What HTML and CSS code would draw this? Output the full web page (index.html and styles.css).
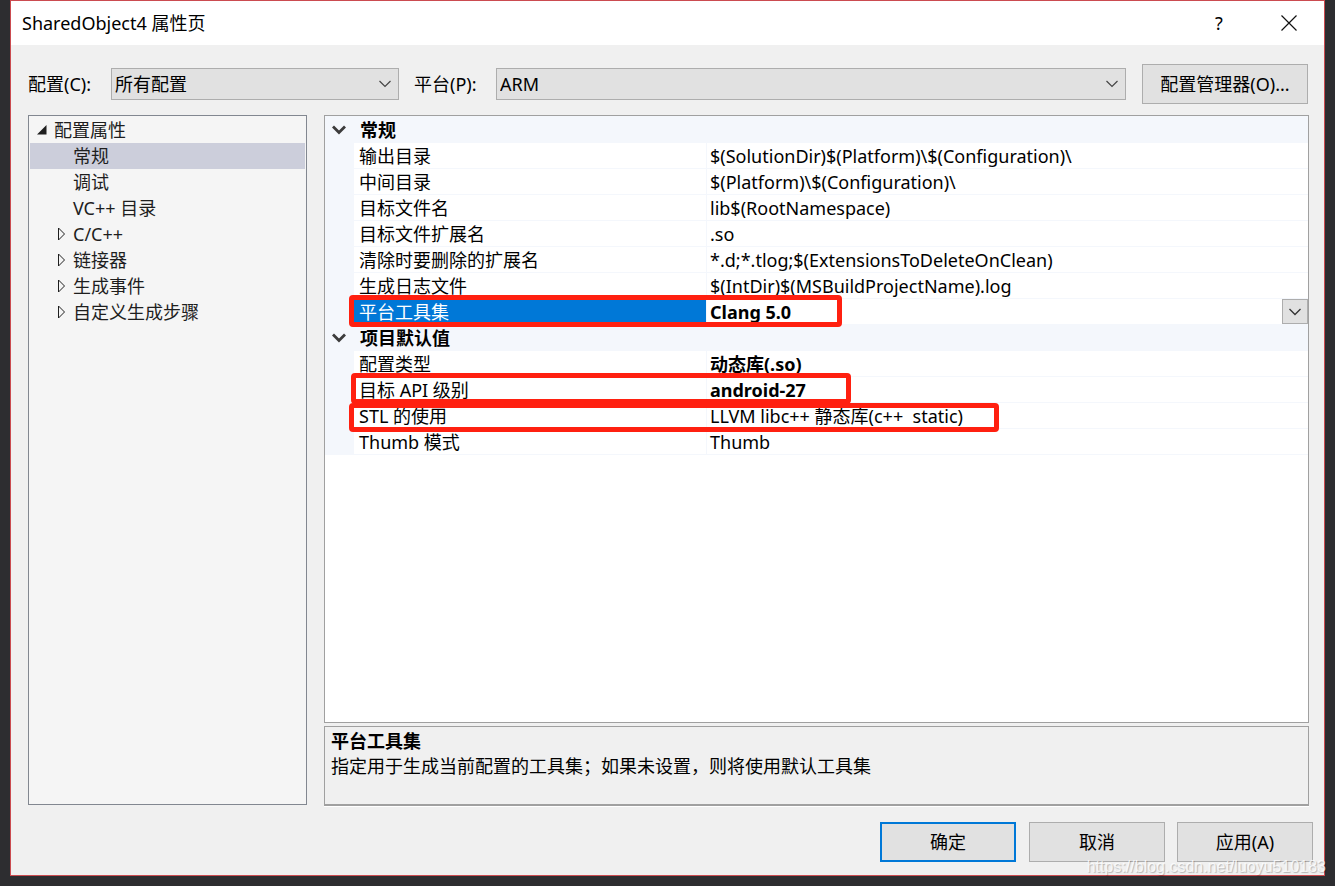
FILE: index.html
```
<!DOCTYPE html>
<html lang="zh-CN">
<head>
    <meta charset="UTF-8">
    <meta name="viewport" content="width=device-width, initial-scale=1.0">
    <title>SharedObject4 属性页</title>
    <link rel="stylesheet" href="styles.css">
</head>
<body>

    <div class="dialog">
        <header class="titlebar">
            <h1>SharedObject4 属性页</h1>
            <button class="title-button" aria-label="帮助">?</button>
            <button class="title-button" aria-label="关闭">
                <svg width="16" height="16" viewBox="0 0 16 16"><path d="M0.5 0.5L15.5 15.5M15.5 0.5L0.5 15.5" fill="none" stroke="#111" stroke-width="1.2"/></svg>
            </button>
        </header>

        <div class="toolbar">
            <label class="config-label" for="config">配置(C):</label>
            <div class="dropdown config">
                <select id="config"><option>所有配置</option></select>
                <svg width="12" height="8" viewBox="0 0 12 8"><path d="M0.5 1L6 6.5L11.5 1" fill="none" stroke="#444" stroke-width="1.2"/></svg>
            </div>
            <label class="platform-label" for="platform">平台(P):</label>
            <div class="dropdown platform">
                <select id="platform"><option>ARM</option></select>
                <svg width="12" height="8" viewBox="0 0 12 8"><path d="M0.5 1L6 6.5L11.5 1" fill="none" stroke="#444" stroke-width="1.2"/></svg>
            </div>
            <button class="button manager">配置管理器(O)...</button>
        </div>

        <main>
            <nav class="tree">
                <ul>
                    <li class="root"><svg width="10" height="10" viewBox="0 0 10 10"><path d="M9.5 0V9.5H0Z" fill="#1e1e1e"/></svg>配置属性</li>
                    <li class="selected">常规</li>
                    <li>调试</li>
                    <li>VC++ 目录</li>
                    <li><svg width="8" height="14" viewBox="0 0 8 14"><path d="M0.5 1L6.5 7L0.5 13Z" fill="none" stroke="#1e1e1e"/></svg>C/C++</li>
                    <li><svg width="8" height="14" viewBox="0 0 8 14"><path d="M0.5 1L6.5 7L0.5 13Z" fill="none" stroke="#1e1e1e"/></svg>链接器</li>
                    <li><svg width="8" height="14" viewBox="0 0 8 14"><path d="M0.5 1L6.5 7L0.5 13Z" fill="none" stroke="#1e1e1e"/></svg>生成事件</li>
                    <li><svg width="8" height="14" viewBox="0 0 8 14"><path d="M0.5 1L6.5 7L0.5 13Z" fill="none" stroke="#1e1e1e"/></svg>自定义生成步骤</li>
                </ul>
            </nav>

            <div class="properties">
                <div class="grid">
                    <table>
                        <colgroup>
                            <col class="col-gutter">
                            <col class="col-name">
                            <col>
                        </colgroup>
                        <tbody>
                            <tr class="category">
                                <td class="gutter"><svg width="14" height="10" viewBox="0 0 14 10"><path d="M1 1.5L7 7.5L13 1.5" fill="none" stroke="#3c3c3c" stroke-width="2.8"/></svg></td>
                                <th colspan="2">常规</th>
                            </tr>
                            <tr><td class="gutter"></td><td class="name">输出目录</td><td>$(SolutionDir)$(Platform)\$(Configuration)\</td></tr>
                            <tr><td class="gutter"></td><td class="name">中间目录</td><td>$(Platform)\$(Configuration)\</td></tr>
                            <tr><td class="gutter"></td><td class="name">目标文件名</td><td>lib$(RootNamespace)</td></tr>
                            <tr><td class="gutter"></td><td class="name">目标文件扩展名</td><td>.so</td></tr>
                            <tr><td class="gutter"></td><td class="name">清除时要删除的扩展名</td><td>*.d;*.tlog;$(ExtensionsToDeleteOnClean)</td></tr>
                            <tr><td class="gutter"></td><td class="name">生成日志文件</td><td>$(IntDir)$(MSBuildProjectName).log</td></tr>
                            <tr class="current">
                                <td class="gutter"></td>
                                <td class="name">平台工具集</td>
                                <td class="changed">
                                    <div class="editor">
                                        <span>Clang 5.0</span>
                                        <button class="open-list" aria-label="打开列表"><svg width="12" height="8" viewBox="0 0 12 8"><path d="M0.5 1L6 6.5L11.5 1" fill="none" stroke="#333" stroke-width="1.3"/></svg></button>
                                    </div>
                                </td>
                            </tr>
                            <tr class="category">
                                <td class="gutter"><svg width="14" height="10" viewBox="0 0 14 10"><path d="M1 1.5L7 7.5L13 1.5" fill="none" stroke="#3c3c3c" stroke-width="2.8"/></svg></td>
                                <th colspan="2">项目默认值</th>
                            </tr>
                            <tr><td class="gutter"></td><td class="name">配置类型</td><td class="changed">动态库(.so)</td></tr>
                            <tr><td class="gutter"></td><td class="name">目标 API 级别</td><td class="changed">android-27</td></tr>
                            <tr><td class="gutter"></td><td class="name">STL 的使用</td><td>LLVM libc++ 静态库(c++&nbsp; static)</td></tr>
                            <tr><td class="gutter"></td><td class="name">Thumb 模式</td><td>Thumb</td></tr>
                        </tbody>
                    </table>
                    <div class="mark mark-toolset"></div>
                    <div class="mark mark-api"></div>
                    <div class="mark mark-stl"></div>
                </div>

                <section class="description">
                    <h2>平台工具集</h2>
                    <p>指定用于生成当前配置的工具集；如果未设置，则将使用默认工具集</p>
                </section>
            </div>
        </main>

        <footer>
            <button class="button default">确定</button>
            <button class="button">取消</button>
            <button class="button">应用(A)</button>
        </footer>

        <div class="watermark">https://blog.csdn.net/luoyu510183</div>
    </div>

</body>
</html>
```
FILE: styles.css
```
* {
    box-sizing: border-box;
}

body {
    margin: 0;
    padding: 0 10px 10px;
    min-height: 100vh;
    display: flex;
    background-color: #2d2d30;
    color: #000;
    font-family: "Noto Sans", "Noto Sans CJK SC", sans-serif;
    font-size: 18px;
    line-height: 26px;
}

button, select {
    font: inherit;
    color: inherit;
}

svg {
    display: block;
}

.dialog {
    position: relative;
    flex: 1;
    min-width: 0;
    display: flex;
    flex-direction: column;
    background-color: #f0f0f0;
    border: 1px solid #cb4b50;
}

/* Titelleiste */
.titlebar {
    display: flex;
    align-items: center;
    height: 44px;
    padding-left: 11px;
    background-color: #fff;
}

.titlebar h1 {
    flex: 1;
    margin: 0;
    font-size: 18px;
    font-weight: normal;
}

.title-button {
    display: flex;
    align-items: center;
    justify-content: center;
    width: 70px;
    height: 44px;
    padding: 0;
    border: none;
    background: none;
}

.toolbar {
    display: flex;
    align-items: center;
    padding: 19px 16px 11px 17px;
}

.config-label {
    width: 83px;
}

.platform-label {
    width: 82px;
}

.dropdown {
    position: relative;
}

.dropdown select {
    display: block;
    width: 100%;
    height: 32px;
    padding: 0 24px 0 3px;
    border: 1px solid #adadad;
    border-radius: 0;
    background-color: #e1e1e1;
    appearance: none;
}

.dropdown svg {
    position: absolute;
    right: 8px;
    top: 12px;
    pointer-events: none;
}

.config {
    width: 288px;
    margin-right: 15px;
}

.platform {
    flex: 1;
    margin-right: 16px;
}

.button {
    width: 136px;
    height: 40px;
    padding: 0;
    border: 1px solid #adadad;
    background-color: #e1e1e1;
}

.button.default {
    margin-right: 1px;
    border: 2px solid #0078d7;
}

.button.manager {
    width: 166px;
}

main {
    flex: 1;
    display: flex;
    gap: 17px;
    padding: 0 15px 0 17px;
}

.tree {
    width: 279px;
    margin-bottom: 1px;
    padding: 1px;
    border: 1px solid #828790;
    background-color: #f5f5f5;
    color: #1e1e1e;
}

.tree ul {
    list-style: none;
    margin: 0;
    padding: 0;
}

.tree li {
    position: relative;
    height: 26px;
    padding-left: 43px;
}

.tree li.root {
    padding-left: 24px;
}

.tree li.selected {
    background-color: #cccedb;
}

.tree svg {
    position: absolute;
    left: 28px;
    top: 6px;
}

.tree .root svg {
    left: 7px;
    top: 8px;
}

.properties {
    flex: 1;
    min-width: 0;
    display: flex;
    flex-direction: column;
    gap: 3px;
}

.grid {
    position: relative;
    flex: 1;
    padding-top: 1px;
    border: 1px solid #a0a0a0;
    background: linear-gradient(#f4f7fc 1px, #fff 1px);
}

.grid table {
    width: 100%;
    table-layout: fixed;
    border-collapse: separate;
    border-spacing: 0;
}

.col-gutter {
    width: 29px;
}

.col-name {
    width: 353px;
}

.grid td, .grid th {
    height: 26px;
    padding: 0 0 0 3px;
    box-shadow: inset 0 -1px #f4f7fc;
    line-height: 26px;
    text-align: left;
    white-space: nowrap;
}

.grid th {
    padding-left: 6px;
}

.grid td.name {
    padding-left: 5px;
    border-right: 1px solid #f4f7fc;
}

.grid td.gutter {
    padding-left: 7px;
    background-color: #f4f7fc;
}

.grid td.changed {
    font-weight: bold;
}

.category {
    background-color: #f4f7fc;
}

.current .name {
    background-color: #0078d7;
    color: #fff;
}

.editor {
    display: flex;
    justify-content: space-between;
    height: 26px;
}

.open-list {
    display: flex;
    align-items: center;
    justify-content: center;
    width: 26px;
    height: 25px;
    padding: 0;
    border: 1px solid #adadad;
    background-color: #e1e1e1;
}

/* rote Markierungen über der Tabelle */
.mark {
    position: absolute;
    border: 5px solid #ff2010;
    border-radius: 4px;
    pointer-events: none;
}

.mark-toolset {
    left: 24px;
    top: 179px;
    width: 493px;
    height: 32px;
}

.mark-api {
    left: 26px;
    top: 257px;
    width: 500px;
    height: 31px;
}

.mark-stl {
    left: 24px;
    top: 287px;
    width: 650px;
    height: 29px;
}

.description {
    height: 80px;
    padding: 2px 6px;
    border: 1px solid #a0a0a0;
    border-bottom-width: 2px;
    box-shadow: 0 1px 0 #fff;
}

.description h2, .description p {
    margin: 0;
    font-size: 18px;
    line-height: 25px;
}

footer {
    display: flex;
    justify-content: flex-end;
    gap: 12px;
    padding: 16px 11px 13px;
}

.watermark {
    position: absolute;
    right: -2px;
    bottom: 0;
    font-family: "Liberation Sans", Arial, sans-serif;
    font-size: 16px;
    line-height: 16px;
    color: rgba(255, 255, 255, 0.8);
    text-shadow: 1px 1px 1px rgba(0, 0, 0, 0.25);
    pointer-events: none;
}
```
